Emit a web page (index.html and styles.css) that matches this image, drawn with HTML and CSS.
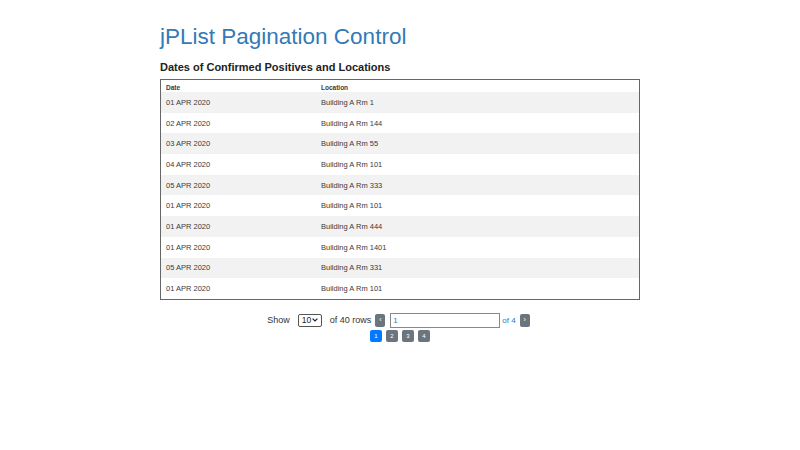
FILE: index.html
```html
<!DOCTYPE html>
<html lang="en">

<head>
  <meta charset="UTF-8">
  <title>jPList Pagination Control</title>

  <link rel="stylesheet" href="styles.css">
</head>

<body>
  <div class="container">
    <h1>jPList Pagination Control</h1>
    <h2>Dates of Confirmed Positives and Locations</h2>

    <table class="cases">
      <thead>
        <tr>
          <th>Date</th>
          <th>Location</th>
        </tr>
      </thead>
      <tbody>
        <tr><td>01 APR 2020</td><td>Building A Rm 1</td></tr>
        <tr><td>02 APR 2020</td><td>Building A Rm 144</td></tr>
        <tr><td>03 APR 2020</td><td>Building A Rm 55</td></tr>
        <tr><td>04 APR 2020</td><td>Building A Rm 101</td></tr>
        <tr><td>05 APR 2020</td><td>Building A Rm 333</td></tr>
        <tr><td>01 APR 2020</td><td>Building A Rm 101</td></tr>
        <tr><td>01 APR 2020</td><td>Building A Rm 444</td></tr>
        <tr><td>01 APR 2020</td><td>Building A Rm 1401</td></tr>
        <tr><td>05 APR 2020</td><td>Building A Rm 331</td></tr>
        <tr><td>01 APR 2020</td><td>Building A Rm 101</td></tr>
      </tbody>
    </table>

    <!-- pagination control -->
    <div class="pager">
      <div class="pager-top">
        <span class="label">Show</span>
        <select class="per-page">
          <option>10</option>
          <option>20</option>
          <option>40</option>
        </select>
        <span class="label">of 40 rows</span>
        <button class="btn btn-nav">&lsaquo;</button>
        <input class="page-input" type="text" value="1">
        <span class="total">of 4</span>
        <button class="btn btn-nav">&rsaquo;</button>
      </div>
      <div class="pager-pages">
        <button class="btn active">1</button>
        <button class="btn">2</button>
        <button class="btn">3</button>
        <button class="btn">4</button>
      </div>
    </div>
  </div>
</body>

</html>
```

FILE: styles.css
```css
html {
  background: white;
}

body {
  margin: 0;
  font-family: "Liberation Sans", Arial, sans-serif;
  color: #212529;
}

.container {
  width: 480px;
  margin: 0 auto;
  padding-top: 22px;
}

h1 {
  margin: 0;
  font-size: 22.5px;
  font-weight: normal;
  line-height: 30px;
  color: #337ab7;
}

h2 {
  margin: 8px 0 5px;
  font-size: 11px;
  line-height: 14px;
  color: #222;
}

.cases {
  width: 100%;
  border-collapse: collapse;
  border: 1px solid #666;
  font-size: 7.5px;
  color: #3a3a3a;
}

.cases th {
  text-align: left;
  font-size: 6.5px;
  padding: 2px 5px 0;
  height: 10px;
}

.cases th:first-child {
  width: 145px;
}

.cases td {
  padding: 0 5px;
  height: 20.7px;
}

.cases tbody tr:nth-child(odd) {
  background: #f2f2f2;
}

.pager {
  margin-top: 13px;
  font-size: 9px;
  color: #333;
}

.pager-top,
.pager-pages {
  display: flex;
  justify-content: center;
  align-items: center;
}

.pager-top {
  padding-right: 7px;
}

.pager-top .label {
  margin: 0 4px;
}

.per-page {
  appearance: none;
  -webkit-appearance: none;
  width: 24px;
  height: 13px;
  padding: 0 0 0 3px;
  margin: 0 4px;
  border: 1px solid #555;
  border-radius: 2px;
  background: white url("data:image/svg+xml,%3Csvg xmlns='http://www.w3.org/2000/svg' width='6' height='4' viewBox='0 0 6 4'%3E%3Cpath d='M0.6 0.6 L3 3 L5.4 0.6' fill='none' stroke='%23222' stroke-width='1.2'/%3E%3C/svg%3E") no-repeat right 3px center;
  font-size: 8.5px;
  font-family: inherit;
  color: #222;
}

.page-input {
  width: 104px;
  height: 11px;
  padding: 1px 2px;
  margin: 0 2px 0 5px;
  border: 1px solid #888;
  font-size: 8px;
  font-family: inherit;
  color: #337ab7;
}

.total {
  color: #337ab7;
  margin-right: 4px;
  font-size: 8px;
}

.btn {
  width: 12px;
  height: 12px;
  padding: 0;
  border: 0;
  border-radius: 2px;
  background: #6c757d;
  color: white;
  font-size: 6px;
  font-family: inherit;
  line-height: 12px;
  text-align: center;
}

.btn-nav {
  width: 10px;
  height: 13px;
  font-size: 7px;
}

.pager-pages {
  gap: 4px;
  margin-top: 2px;
}

.btn.active {
  background: #007bff;
}
```
